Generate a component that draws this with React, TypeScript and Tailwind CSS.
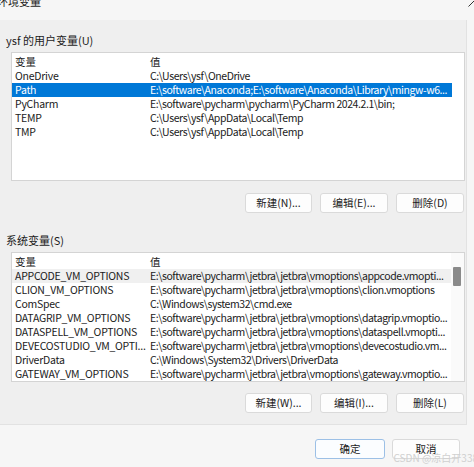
import React from 'react';

type Row = { name: string; value: string };

const userVars: Row[] = [
  { name: 'OneDrive', value: 'C:\\Users\\ysf\\OneDrive' },
  { name: 'Path', value: 'E:\\software\\Anaconda;E:\\software\\Anaconda\\Library\\mingw-w6...' },
  { name: 'PyCharm', value: 'E:\\software\\pycharm\\pycharm\\PyCharm 2024.2.1\\bin;' },
  { name: 'TEMP', value: 'C:\\Users\\ysf\\AppData\\Local\\Temp' },
  { name: 'TMP', value: 'C:\\Users\\ysf\\AppData\\Local\\Temp' },
];

const sysVars: Row[] = [
  { name: 'APPCODE_VM_OPTIONS', value: 'E:\\software\\pycharm\\jetbra\\jetbra\\vmoptions\\appcode.vmopti...' },
  { name: 'CLION_VM_OPTIONS', value: 'E:\\software\\pycharm\\jetbra\\jetbra\\vmoptions\\clion.vmoptions' },
  { name: 'ComSpec', value: 'C:\\Windows\\system32\\cmd.exe' },
  { name: 'DATAGRIP_VM_OPTIONS', value: 'E:\\software\\pycharm\\jetbra\\jetbra\\vmoptions\\datagrip.vmoptio...' },
  { name: 'DATASPELL_VM_OPTIONS', value: 'E:\\software\\pycharm\\jetbra\\jetbra\\vmoptions\\dataspell.vmopti...' },
  { name: 'DEVECOSTUDIO_VM_OPTI...', value: 'E:\\software\\pycharm\\jetbra\\jetbra\\vmoptions\\devecostudio.vm...' },
  { name: 'DriverData', value: 'C:\\Windows\\System32\\Drivers\\DriverData' },
  { name: 'GATEWAY_VM_OPTIONS', value: 'E:\\software\\pycharm\\jetbra\\jetbra\\vmoptions\\gateway.vmoptio...' },
];

const Button: React.FC<{ label: string; primary?: boolean; className?: string }> = ({ label, primary, className = '' }) => (
  <div
    className={`h-[20px] flex items-center justify-center rounded-[3px] border text-[10.5px] text-[#1b1b1b] ${
      primary ? 'border-[#9cc0e6] bg-[#fbfdff]' : 'border-[#dadada] bg-[#fdfdfd]'
    } ${className}`}
  >
    {label}
  </div>
);

// list view with header row, rows of 14px
const VarList: React.FC<{ rows: Row[]; selected?: number; hover?: number; scroll?: boolean; height: string }> = ({
  rows,
  selected,
  hover,
  scroll,
  height,
}) => (
  <div className={`relative ml-[10px] w-[454px] ${height} border border-[#d4d4d4] bg-white overflow-hidden`}>
    <div className="pt-[2px] pr-[12px] text-[10.5px]">
      <div className="flex h-[14px] leading-[14px] text-[#1b1b1b]">
        <div className="w-[138px] pl-[3px]">变量</div>
        <div className="flex-1">值</div>
      </div>
      {rows.map((r, i) => {
        const sel = i === selected;
        const hov = i === hover;
        return (
          <div
            key={r.name}
            className={`flex h-[14px] leading-[14px] whitespace-nowrap ${
              sel ? 'bg-[#0078d7] text-white' : hov ? 'bg-[#f0f0f0] text-[#1b1b1b]' : 'text-[#1b1b1b]'
            }`}
          >
            <div className="w-[138px] pl-[3px] overflow-hidden tracking-[-0.25px]">{r.name}</div>
            <div className="flex-1 overflow-hidden tracking-[-0.43px]">{r.value}</div>
          </div>
        );
      })}
    </div>
    {scroll && (
      <div className="absolute right-0 top-0 bottom-0 w-[13px] bg-[#fafafa]">
        <div className="absolute left-[2px] top-[14px] w-[8px] h-[19px] rounded-[1px] bg-[#8a8a8a]" />
      </div>
    )}
  </div>
);

export default function App() {
  return (
    <div
      className="relative w-[474px] h-[467px] overflow-hidden bg-[#f6f6f6] text-[#1b1b1b]"
      style={{ fontFamily: '"Segoe UI", "Noto Sans CJK SC", sans-serif' }}
    >
      {/* title bar, cut off at top */}
      <div className="h-[20px] relative">
        <div className="absolute left-[-3px] top-[-6px] text-[11px] leading-[14px]">环境变量</div>
        <svg className="absolute right-0 top-0" width="6" height="7" viewBox="0 0 6 7">
          <path d="M0.5 6.5 L6 1" stroke="#333" strokeWidth="1" fill="none" />
        </svg>
      </div>

      {/* tab page */}
      <div className="flex flex-col w-[467px] h-[405px] bg-[#efefef] border-r border-b border-[#e2e2e2] pl-[1px]">
        <div className="mt-[13px] h-[14px] leading-[14px] pl-[5px] text-[11px]">ysf 的用户变量(U)</div>
        <div className="mt-[5px]">
          <VarList rows={userVars} selected={1} height="h-[129px]" />
        </div>
        <div className="mt-[12px] flex justify-end gap-[8px] pr-[2px]">
          <Button label="新建(N)..." className="w-[67px]" />
          <Button label="编辑(E)..." className="w-[68px]" />
          <Button label="删除(D)" className="w-[68px]" />
        </div>

        <div className="mt-[20px] h-[14px] leading-[14px] pl-[5px] text-[11px]">系统变量(S)</div>
        <div className="mt-[5px]">
          <VarList rows={sysVars} hover={0} scroll height="h-[130px]" />
        </div>
        <div className="mt-[11px] flex justify-end gap-[8px] pr-[2px]">
          <Button label="新建(W)..." className="w-[67px]" />
          <Button label="编辑(I)..." className="w-[68px]" />
          <Button label="删除(L)" className="w-[68px]" />
        </div>
      </div>

      {/* dialog buttons */}
      <div className="mt-[14px] flex gap-[7px] pl-[315px]">
        <Button label="确定" primary className="w-[70px]" />
        <Button label="取消" className="w-[68px]" />
      </div>

      <div className="absolute right-[-4px] top-[452px] text-[10px] leading-[12px] text-[#d0d0d0]">CSDN @凉白开338</div>
    </div>
  );
}
